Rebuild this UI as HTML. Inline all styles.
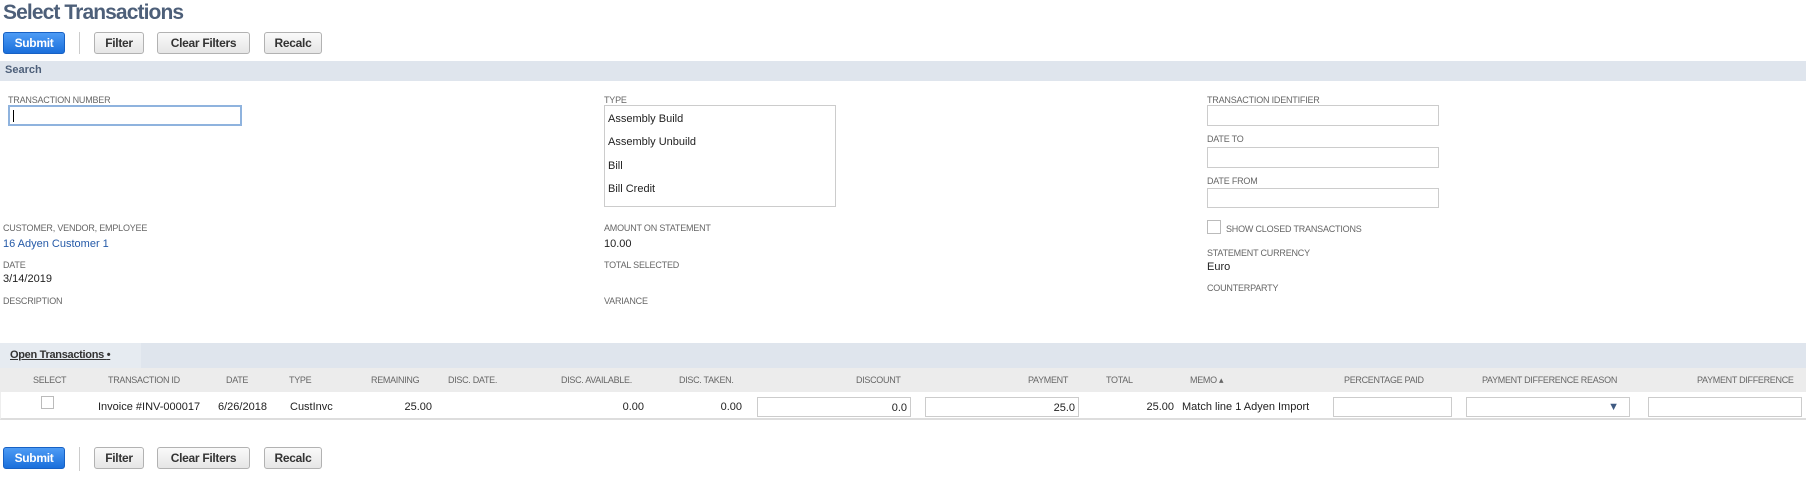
<!DOCTYPE html>
<html><head><meta charset="utf-8"><style>
*{box-sizing:border-box;margin:0;padding:0}
body{width:1816px;height:485px;background:#fff;font-family:"Liberation Sans",sans-serif;color:#222;position:relative;overflow:hidden;font-size:11px}
.a{position:absolute;white-space:nowrap}
.t{font-size:21px;font-weight:bold;color:#4d5f79;letter-spacing:-0.9px}
.btn{position:absolute;height:22px;border:1px solid #b2b2b2;border-radius:3px;background:linear-gradient(#fafafa,#e6e6e6);font-size:12px;font-weight:bold;color:#333;text-align:center;line-height:20px;letter-spacing:-0.3px}
.sub{background:linear-gradient(#4d9bf5,#1a6fdb);border-color:#1761c4;color:#fff}
.sep{position:absolute;width:1px;background:#ccc}
.lb{position:absolute;font-size:9px;color:#666;white-space:nowrap;letter-spacing:-0.2px}
.in{position:absolute;border:1px solid #ccc;background:#fff}
.band{position:absolute;background:#dfe5ed}
.h{position:absolute;font-size:9px;color:#666;white-space:nowrap;letter-spacing:-0.3px}
</style></head><body>
<div class="a t" style="left:3px;top:1px">Select Transactions</div>
<div class="btn sub" style="left:3px;top:32px;width:62px">Submit</div>
<div class="sep" style="left:79px;top:32px;height:22px"></div>
<div class="btn" style="left:94px;top:32px;width:50px">Filter</div>
<div class="btn" style="left:157px;top:32px;width:93px">Clear Filters</div>
<div class="btn" style="left:264px;top:32px;width:58px">Recalc</div>
<div class="band" style="left:0;top:61px;width:1806px;height:20px"></div>
<div class="a" style="left:5px;top:64px;font-size:11px;font-weight:bold;color:#4d5f79">Search</div>

<div class="lb" style="left:8px;top:95px">TRANSACTION NUMBER</div>
<div class="in" style="left:8px;top:105px;width:234px;height:21px;border:2px solid #8fb3de"><div style="position:absolute;left:3px;top:3px;width:1px;height:12px;background:#000"></div></div>

<div class="lb" style="left:604px;top:95px">TYPE</div>
<div class="in" style="left:604px;top:105px;width:232px;height:102px"></div>
<div class="a" style="left:608px;top:113px">Assembly Build</div>
<div class="a" style="left:608px;top:136px">Assembly Unbuild</div>
<div class="a" style="left:608px;top:160px">Bill</div>
<div class="a" style="left:608px;top:183px">Bill Credit</div>

<div class="lb" style="left:1207px;top:95px">TRANSACTION IDENTIFIER</div>
<div class="in" style="left:1207px;top:105px;width:232px;height:21px"></div>
<div class="lb" style="left:1207px;top:134px">DATE TO</div>
<div class="in" style="left:1207px;top:147px;width:232px;height:21px"></div>
<div class="lb" style="left:1207px;top:176px">DATE FROM</div>
<div class="in" style="left:1207px;top:188px;width:232px;height:20px"></div>

<div class="lb" style="left:3px;top:223px">CUSTOMER, VENDOR, EMPLOYEE</div>
<div class="a" style="left:3px;top:238px;color:#255aa8">16 Adyen Customer 1</div>
<div class="lb" style="left:3px;top:260px">DATE</div>
<div class="a" style="left:3px;top:273px">3/14/2019</div>
<div class="lb" style="left:3px;top:296px">DESCRIPTION</div>

<div class="lb" style="left:604px;top:223px">AMOUNT ON STATEMENT</div>
<div class="a" style="left:604px;top:238px">10.00</div>
<div class="lb" style="left:604px;top:260px">TOTAL SELECTED</div>
<div class="lb" style="left:604px;top:296px">VARIANCE</div>

<div class="in" style="left:1207px;top:220px;width:14px;height:14px;border-color:#bbb"></div>
<div class="lb" style="left:1226px;top:224px">SHOW CLOSED TRANSACTIONS</div>
<div class="lb" style="left:1207px;top:248px">STATEMENT CURRENCY</div>
<div class="a" style="left:1207px;top:261px">Euro</div>
<div class="lb" style="left:1207px;top:283px">COUNTERPARTY</div>

<div class="band" style="left:0;top:343px;width:1806px;height:25px"></div>
<div class="a" style="left:0;top:343px;width:141px;height:25px;background:#e6ebf1"></div>
<div class="a" style="left:10px;top:349px;font-size:11px;font-weight:bold;color:#333;text-decoration:underline;letter-spacing:-0.3px">Open Transactions <span style="text-decoration:none">•</span></div>
<div class="a" style="left:0;top:368px;width:1806px;height:24px;background:#ececec"></div>
<div class="a" style="left:0;top:392px;width:1806px;height:28px;border-bottom:2px solid #ddd;border-left:1px solid #eee"></div>
<div class="h" style="left:33px;top:375px">SELECT</div>
<div class="h" style="left:108px;top:375px">TRANSACTION ID</div>
<div class="h" style="left:226px;top:375px">DATE</div>
<div class="h" style="left:289px;top:375px">TYPE</div>
<div class="h" style="left:371px;top:375px">REMAINING</div>
<div class="h" style="left:448px;top:375px">DISC. DATE.</div>
<div class="h" style="left:561px;top:375px">DISC. AVAILABLE.</div>
<div class="h" style="left:679px;top:375px">DISC. TAKEN.</div>
<div class="h" style="left:856px;top:375px">DISCOUNT</div>
<div class="h" style="left:1028px;top:375px">PAYMENT</div>
<div class="h" style="left:1106px;top:375px">TOTAL</div>
<div class="h" style="left:1190px;top:375px">MEMO ▴</div>
<div class="h" style="left:1344px;top:375px">PERCENTAGE PAID</div>
<div class="h" style="left:1482px;top:375px">PAYMENT DIFFERENCE REASON</div>
<div class="h" style="left:1697px;top:375px">PAYMENT DIFFERENCE</div>

<div class="in" style="left:41px;top:396px;width:13px;height:13px;border-color:#bbb"></div>
<div class="a" style="left:98px;top:401px">Invoice #INV-000017</div>
<div class="a" style="left:218px;top:401px">6/26/2018</div>
<div class="a" style="left:290px;top:401px">CustInvc</div>
<div class="a" style="left:390px;top:401px;width:42px;text-align:right">25.00</div>
<div class="a" style="left:600px;top:401px;width:44px;text-align:right">0.00</div>
<div class="a" style="left:698px;top:401px;width:44px;text-align:right">0.00</div>
<div class="in" style="left:757px;top:397px;width:154px;height:20px"><span style="position:absolute;right:3px;top:4px">0.0</span></div>
<div class="in" style="left:925px;top:397px;width:154px;height:20px"><span style="position:absolute;right:3px;top:4px">25.0</span></div>
<div class="a" style="left:1130px;top:401px;width:44px;text-align:right">25.00</div>
<div class="a" style="left:1182px;top:401px">Match line 1 Adyen Import</div>
<div class="in" style="left:1333px;top:397px;width:119px;height:20px"></div>
<div class="in" style="left:1466px;top:397px;width:164px;height:20px"><span style="position:absolute;right:10px;top:3px;color:#3f5a82;font-size:11px">▼</span></div>
<div class="in" style="left:1648px;top:397px;width:154px;height:20px"></div>

<div class="btn sub" style="left:3px;top:447px;width:62px">Submit</div>
<div class="sep" style="left:79px;top:447px;height:24px"></div>
<div class="btn" style="left:94px;top:447px;width:50px">Filter</div>
<div class="btn" style="left:157px;top:447px;width:93px">Clear Filters</div>
<div class="btn" style="left:264px;top:447px;width:58px">Recalc</div>
</body></html>
